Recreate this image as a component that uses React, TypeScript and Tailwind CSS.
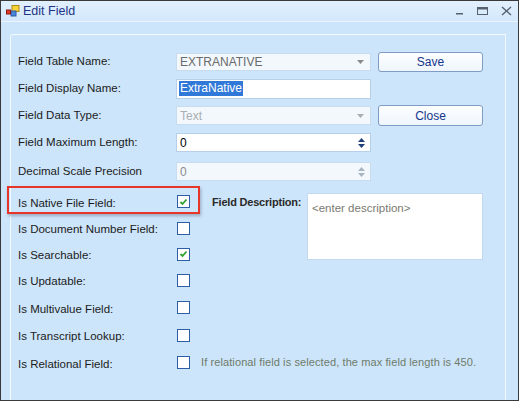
import React from 'react';

const font = { fontFamily: '"Liberation Sans", Arial, sans-serif' };

const AppIcon = () => (
  <svg width="14" height="12" viewBox="0 0 14 12">
    <rect x="6" y="0.5" width="7" height="6" fill="#f7d43a" stroke="#b08a10" strokeWidth="1" />
    <rect x="5" y="6" width="5" height="5" fill="#4a86d8" stroke="#2a5aa8" strokeWidth="1" />
    <rect x="0.5" y="5" width="4" height="4" fill="#e53b2a" stroke="#8a1a10" strokeWidth="1" />
  </svg>
);

const WindowButtons = () => (
  <div className="flex items-center gap-[13px] text-[#56606f]">
    <svg width="9" height="10" viewBox="0 0 9 10">
      <rect x="1" y="7" width="7" height="1.5" fill="currentColor" />
    </svg>
    <svg width="11" height="10" viewBox="0 0 11 10">
      <rect x="0.5" y="1.5" width="10" height="7" fill="none" stroke="currentColor" strokeWidth="1" />
      <rect x="0.5" y="1.5" width="10" height="2" fill="currentColor" />
    </svg>
    <svg width="11" height="10" viewBox="0 0 11 10">
      <path d="M1 1 L10 9 M10 1 L1 9" stroke="currentColor" strokeWidth="1.4" />
    </svg>
  </div>
);

const Label: React.FC<{ children: React.ReactNode }> = ({ children }) => (
  <span className="text-[11.5px] text-[#1b1b1b] whitespace-nowrap">{children}</span>
);

const ComboArrow = ({ color }: { color: string }) => (
  <svg width="7" height="4" viewBox="0 0 7 4" className="mr-[6px]">
    <path d="M0 0 L7 0 L3.5 4 Z" fill={color} />
  </svg>
);

const Spinner = ({ enabled }: { enabled: boolean }) => {
  const c = enabled ? '#1f3f7a' : '#a8b4c0';
  return (
    <div className="flex flex-col gap-[2px] mr-[5px]">
      <svg width="7" height="4" viewBox="0 0 7 4">
        <path d="M0 4 L7 4 L3.5 0 Z" fill={c} />
      </svg>
      <svg width="7" height="4" viewBox="0 0 7 4">
        <path d="M0 0 L7 0 L3.5 4 Z" fill={c} />
      </svg>
    </div>
  );
};

const Button: React.FC<{ children: React.ReactNode; className?: string }> = ({ children, className }) => (
  <button
    className={`w-[105px] rounded-[3px] border border-[#7f9cc4] bg-gradient-to-b from-[#fdfeff] to-[#eef5fd] text-[12px] text-[#15358a] ${className ?? ''}`}
  >
    {children}
  </button>
);

const Checkbox = ({ checked }: { checked?: boolean }) => (
  <div className="w-[13px] h-[13px] border border-[#2d5ea6] bg-white flex items-center justify-center">
    {checked && (
      <svg width="9" height="8" viewBox="0 0 9 8">
        <path d="M1.5 4 L3.5 6 L7.5 1.5" fill="none" stroke="#2fa22f" strokeWidth="1.8" />
      </svg>
    )}
  </div>
);

const checkRows: { label: string; checked?: boolean; h: string }[] = [
  { label: 'Is Document Number Field:', h: 'h-[24px]' },
  { label: 'Is Searchable:', checked: true, h: 'h-[28px]' },
  { label: 'Is Updatable:', h: 'h-[24px]' },
  { label: 'Is Multivalue Field:', h: 'h-[31px]' },
  { label: 'Is Transcript Lookup:', h: 'h-[24px]' },
];

export default function App() {
  return (
    <div style={font} className="w-[519px] h-[401px] border border-[#3a3a3a] bg-[#cde5fa] flex flex-col overflow-hidden">
      {/* title bar */}
      <div className="h-[21px] shrink-0 flex items-center justify-between pl-[5px] pr-[6px] bg-gradient-to-b from-[#e2f0fd] to-[#d3e8fb] border-b border-[#eaf4fe]">
        <div className="flex items-center gap-[3px]">
          <AppIcon />
          <span className="text-[12.5px] text-[#1e3486]">Edit Field</span>
        </div>
        <WindowButtons />
      </div>

      <div className="flex-1 pl-[9px] pr-[12px] pt-[12px]">
        <div className="h-full border-l border-t border-r border-[#f2f9ff] rounded-tl-[3px] pl-[7px] pt-[13px]">
          {/* top fields */}
          <div className="grid grid-cols-[158px_195px_auto] grid-rows-[27px_27px_27px_27px_31px] items-center">
            <Label>Field Table Name:</Label>
            <div className="h-[18px] border border-[#c9dcef] bg-[#f3f8fd] flex items-center justify-between">
              <span className="pl-[3px] text-[12px] text-[#6a6a6a]">EXTRANATIVE</span>
              <ComboArrow color="#8a8a8a" />
            </div>
            <Button className="ml-[7px] h-[20px]">Save</Button>

            <Label>Field Display Name:</Label>
            <div className="h-[20px] border border-[#b7cfe8] bg-white flex items-center pl-[2px]">
              <span className="text-[12px] text-white bg-[#3179d8] px-[1px] leading-[15px]">ExtraNative</span>
            </div>
            <div />

            <Label>Field Data Type:</Label>
            <div className="h-[19px] border border-[#c9dcef] bg-[#f3f8fd] flex items-center justify-between">
              <span className="pl-[3px] text-[12px] text-[#a9aeb3]">Text</span>
              <ComboArrow color="#a9aeb3" />
            </div>
            <Button className="ml-[7px] h-[21px]">Close</Button>

            <Label>Field Maximum Length:</Label>
            <div className="h-[19px] border border-[#b7cfe8] bg-white flex items-center justify-between">
              <span className="pl-[3px] text-[12px] text-black">0</span>
              <Spinner enabled />
            </div>
            <div />

            <Label>Decimal Scale Precision</Label>
            <div className="h-[19px] border border-[#c9dcef] bg-[#f3f8fd] flex items-center justify-between">
              <span className="pl-[3px] text-[12px] text-[#8a8a8a]">0</span>
              <Spinner enabled={false} />
            </div>
            <div />
          </div>

          {/* checkbox section */}
          <div className="flex">
            <div className="flex flex-col">
              <div className="relative h-[29px] flex items-center">
                <div className="absolute -left-[11px] -top-[1px] w-[193px] h-[28px] border-2 border-[#e8352a] shadow-[1px_2px_3px_rgba(60,60,90,0.35)]" />
                <div className="w-[159px]">
                  <Label>Is Native File Field:</Label>
                </div>
                <Checkbox checked />
              </div>
              {checkRows.map((r) => (
                <div key={r.label} className={`${r.h} flex items-center`}>
                  <div className="w-[159px]">
                    <Label>{r.label}</Label>
                  </div>
                  <Checkbox checked={r.checked} />
                </div>
              ))}
            </div>
            <div className="ml-[22px] flex items-start">
              <span className="mt-[7px] w-[95px] text-[11px] font-bold text-[#2a2a2a] whitespace-nowrap tracking-[-0.2px]">
                Field Description:
              </span>
              <div className="mt-[6px] w-[176px] h-[67px] border border-[#c3d8ee] bg-white px-[4px] pt-[1px]">
                <span className="text-[11.5px] text-[#7a7a70]">&lt;enter description&gt;</span>
              </div>
            </div>
          </div>

          <div className="h-[31px] flex items-center">
            <div className="w-[159px]">
              <Label>Is Relational Field:</Label>
            </div>
            <Checkbox />
            <span className="ml-[11px] text-[11px] text-[#6d7b6b] tracking-[0.1px] whitespace-nowrap">
              If relational field is selected, the max field length is 450.
            </span>
          </div>
        </div>
      </div>
    </div>
  );
}
